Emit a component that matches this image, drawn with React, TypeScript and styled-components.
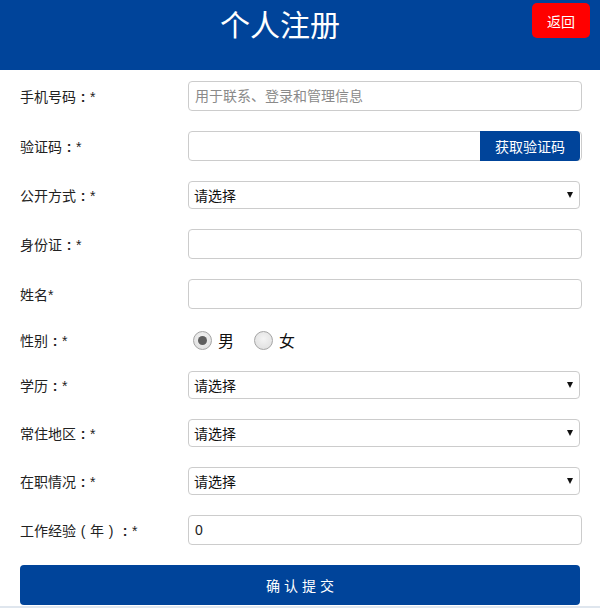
import React from 'react'
import styled, { createGlobalStyle } from 'styled-components'

const GlobalStyle = createGlobalStyle`
  html, body {
    margin: 0;
    padding: 0;
    background: #dfe6ee;
  }
  body {
    font-family: 'Liberation Sans', 'Noto Sans CJK SC', sans-serif;
    color: #222;
  }
`

const Page = styled.div`
  width: 600px;
  height: 606px;
  background: #fff;
  overflow: hidden;
`

const Header = styled.header`
  position: relative;
  height: 70px;
  background: #00449a;
`

const Title = styled.h1`
  margin: 0;
  padding: 3px 40px 0 0;
  text-align: center;
  font-size: 30px;
  font-weight: normal;
  line-height: 40px;
  color: #fff;
  font-family: 'Noto Sans CJK SC', sans-serif;
`

const BackButton = styled.button`
  position: absolute;
  top: 3px;
  right: 10px;
  width: 58px;
  height: 35px;
  border: none;
  border-radius: 5px;
  background: #ff0000;
  color: #fff;
  font-size: 14px;
  font-family: 'Noto Sans CJK SC', sans-serif;
  padding: 0;
`

const Form = styled.form`
  display: flex;
  flex-direction: column;
  gap: 20px;
  padding: 11px 18px 0 20px;
`

const Row = styled.div<{ $h: number }>`
  display: flex;
  align-items: center;
  height: ${(p) => p.$h}px;
`

const Label = styled.label`
  width: 168px;
  flex-shrink: 0;
  font-size: 14px;
  color: #222;
  font-family: 'Noto Sans CJK SC', sans-serif;
`

// full-width punctuation drawn centred in a 1em box, as the reference font does
const Punct = styled.span<{ $bold?: boolean }>`
  display: inline-block;
  width: 14px;
  text-align: center;
  font-family: 'Liberation Sans', sans-serif;
  font-weight: ${(p) => (p.$bold ? 'bold' : 'normal')};
`

const Star = styled.span`
  font-family: 'Liberation Sans', sans-serif;
`

const Field = styled.div`
  position: relative;
  flex: 1;
  height: 100%;
  display: flex;
  align-items: center;
`

const TextInput = styled.input`
  box-sizing: border-box;
  width: 100%;
  height: 30px;
  border: 1px solid #ccc;
  border-radius: 4px;
  padding: 0 6px;
  font-size: 14px;
  color: #222;
  font-family: 'Liberation Sans', 'Noto Sans CJK SC', sans-serif;
  outline: none;
  &::placeholder {
    color: #8a8a8a;
  }
`

const CodeButton = styled.button`
  position: absolute;
  top: 0;
  right: 2px;
  width: 100px;
  height: 30px;
  border: none;
  border-radius: 0 4px 4px 0;
  background: #00449a;
  color: #fff;
  font-size: 14px;
  font-family: 'Noto Sans CJK SC', sans-serif;
  padding: 0;
`

const Select = styled.div`
  box-sizing: border-box;
  position: relative;
  width: calc(100% - 2px);
  height: 28px;
  border: 1px solid #ccc;
  border-radius: 4px;
  padding: 0 5px;
  display: flex;
  align-items: center;
  font-size: 14px;
  color: #111;
  font-family: 'Noto Sans CJK SC', sans-serif;
`

const Arrow = styled.span`
  position: absolute;
  right: 6px;
  top: 10px;
  width: 0;
  height: 0;
  border-left: 3.5px solid transparent;
  border-right: 3.5px solid transparent;
  border-top: 6px solid #111;
`

const RadioGroup = styled.div`
  display: flex;
  align-items: center;
  padding-left: 5px;
  gap: 20px;
`

const RadioOption = styled.label`
  display: flex;
  align-items: center;
  gap: 6px;
  font-size: 16px;
  font-family: 'Noto Sans CJK SC', sans-serif;
  color: #111;
`

const RadioDot = styled.span<{ $checked?: boolean }>`
  box-sizing: border-box;
  width: 19px;
  height: 19px;
  border-radius: 50%;
  border: 1px solid #a5a5a5;
  background: radial-gradient(circle at 50% 40%, #f4f4f4 0%, #dcdcdc 100%);
  display: flex;
  align-items: center;
  justify-content: center;
  &::after {
    content: '';
    display: ${(p) => (p.$checked ? 'block' : 'none')};
    width: 9px;
    height: 9px;
    border-radius: 50%;
    background: #5e5e5e;
  }
`

const Submit = styled.button`
  width: 560px;
  height: 40px;
  border: none;
  border-radius: 4px;
  background: #00449a;
  color: #fff;
  font-size: 14px;
  letter-spacing: 4px;
  font-family: 'Noto Sans CJK SC', sans-serif;
  padding: 0 0 0 4px;
`

// label text: "名称" + centred "：" + "*"
const LabelText = ({ name, colon = true }: { name: React.ReactNode; colon?: boolean }) => (
  <Label>
    {name}
    {colon && <Punct $bold>:</Punct>}
    <Star>*</Star>
  </Label>
)

const SelectField = ({ label }: { label: string }) => (
  <Row $h={28}>
    <LabelText name={label} />
    <Field>
      <Select>
        请选择
        <Arrow />
      </Select>
    </Field>
  </Row>
)

const InputField = ({
  label,
  placeholder,
  value,
  colon
}: {
  label: React.ReactNode
  placeholder?: string
  value?: string
  colon?: boolean
}) => (
  <Row $h={30}>
    <LabelText name={label} colon={colon} />
    <Field>
      <TextInput placeholder={placeholder} defaultValue={value} />
    </Field>
  </Row>
)

const App = () => {
  return (
    <Page>
      <GlobalStyle />
      <Header>
        <Title>个人注册</Title>
        <BackButton>返回</BackButton>
      </Header>
      <Form>
        <InputField label='手机号码' placeholder='用于联系、登录和管理信息' />
        <Row $h={30}>
          <LabelText name='验证码' />
          <Field>
            <TextInput />
            <CodeButton type='button'>获取验证码</CodeButton>
          </Field>
        </Row>
        <SelectField label='公开方式' />
        <InputField label='身份证' />
        <InputField label='姓名' colon={false} />
        <Row $h={22}>
          <LabelText name='性别' />
          <RadioGroup>
            <RadioOption>
              <RadioDot $checked />男
            </RadioOption>
            <RadioOption>
              <RadioDot />女
            </RadioOption>
          </RadioGroup>
        </Row>
        <SelectField label='学历' />
        <SelectField label='常住地区' />
        <SelectField label='在职情况' />
        <InputField
          label={
            <>
              工作经验<Punct>(</Punct>年<Punct>)</Punct>
            </>
          }
          value='0'
        />
        <Row $h={40}>
          <Submit type='button'>确认提交</Submit>
        </Row>
      </Form>
    </Page>
  )
}

export default App
